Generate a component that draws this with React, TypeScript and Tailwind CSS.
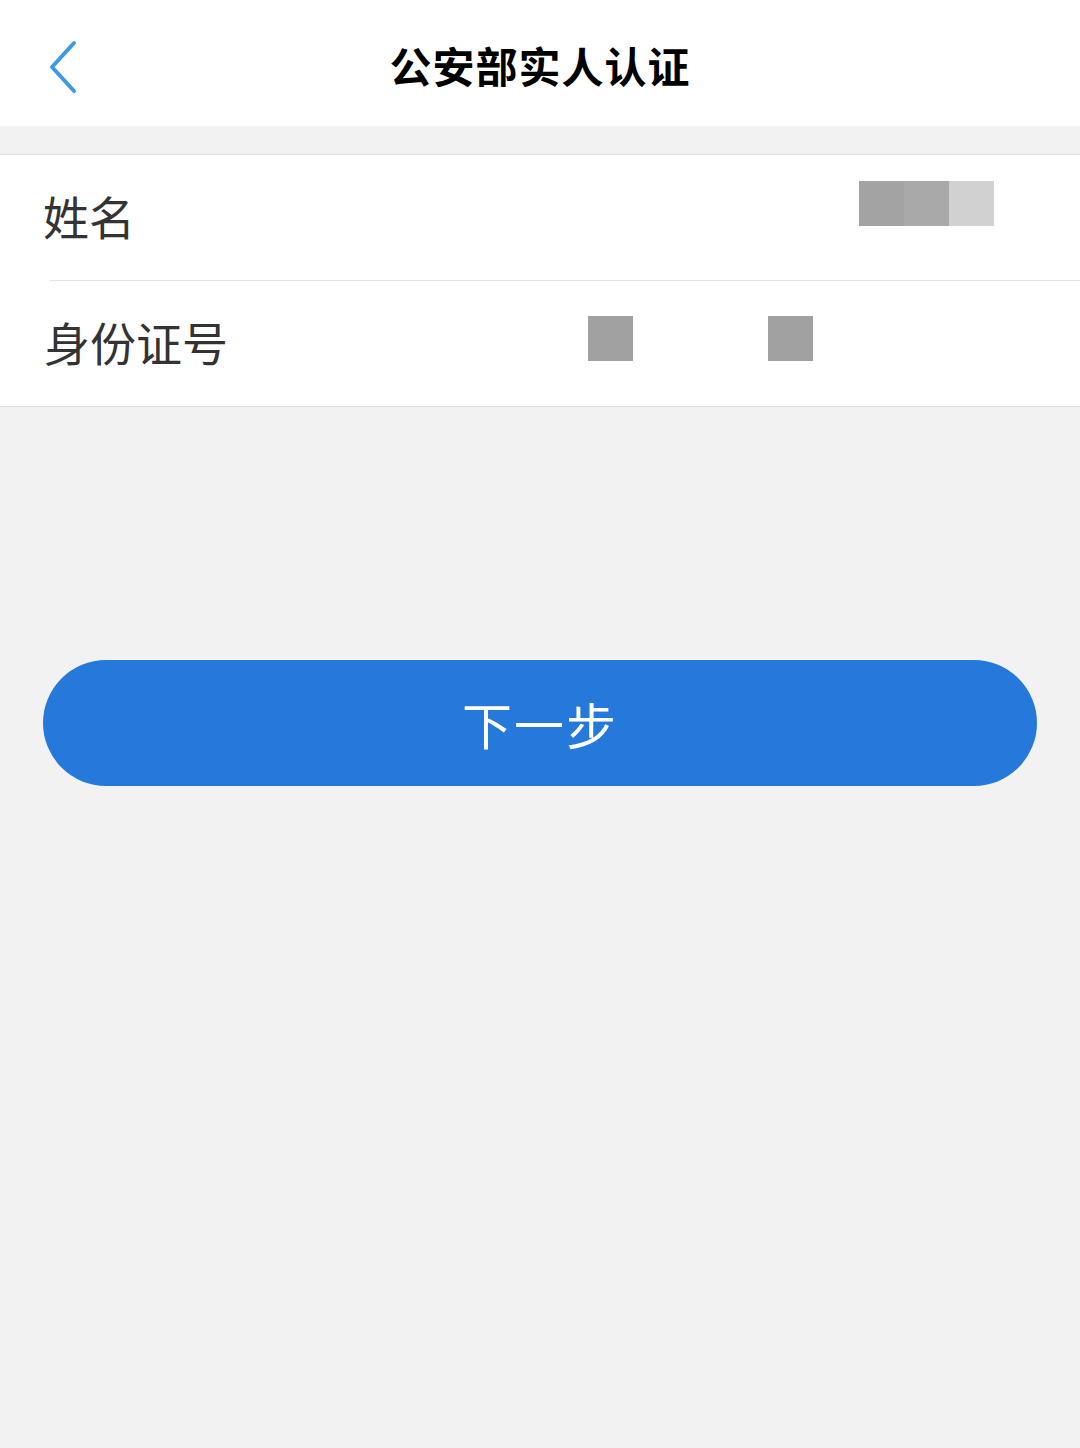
import React from "react";

export default function App() {
  const font = { fontFamily: '"Noto Sans CJK SC", "Noto Sans", sans-serif' };
  return (
    <div className="w-[1080px] h-[1448px] bg-[#f2f2f2] flex flex-col" style={font}>
      <div className="h-[126px] bg-white relative flex items-center justify-center pt-[4px]">
        <svg className="absolute left-[44px] top-[38px]" width="40" height="58" viewBox="0 0 40 58">
          <path d="M30 5 L8 29 L30 53" fill="none" stroke="#3f9ae6" strokeWidth="4" strokeLinecap="round" strokeLinejoin="round" />
        </svg>
        <span className="text-[42px] font-bold text-black leading-none tracking-[1px]">公安部实人认证</span>
      </div>
      <div className="h-[28px]" />
      <div className="bg-white border-t border-b border-[#dcdcdc]">
        <div className="h-[125px] flex items-center pl-[43px] pb-[6px] relative">
          <span className="text-[46px] text-[#333333] leading-none">姓名</span>
          <div className="absolute left-[859px] top-[26px] flex">
            <div className="w-[45px] h-[45px] bg-[#a3a3a3]" />
            <div className="w-[45px] h-[45px] bg-[#a9a9a9]" />
            <div className="w-[45px] h-[45px] bg-[#d1d1d1]" />
          </div>
        </div>
        <div className="ml-[50px] h-px bg-[#e2e2e2]" />
        <div className="h-[125px] flex items-center pl-[44px] pb-[6px] relative">
          <span className="text-[46px] text-[#333333] leading-none">身份证号</span>
          <div className="absolute left-[588px] top-[35px] w-[45px] h-[45px] bg-[#a1a1a1]" />
          <div className="absolute left-[768px] top-[35px] w-[45px] h-[45px] bg-[#a1a1a1]" />
        </div>
      </div>
      <div className="px-[43px] pt-[253px]">
        <div className="h-[126px] w-[994px] rounded-full bg-[#2479db] flex items-center justify-center">
          <span className="text-[50px] text-white font-normal leading-none tracking-[2px]">下一步</span>
        </div>
      </div>
    </div>
  );
}
